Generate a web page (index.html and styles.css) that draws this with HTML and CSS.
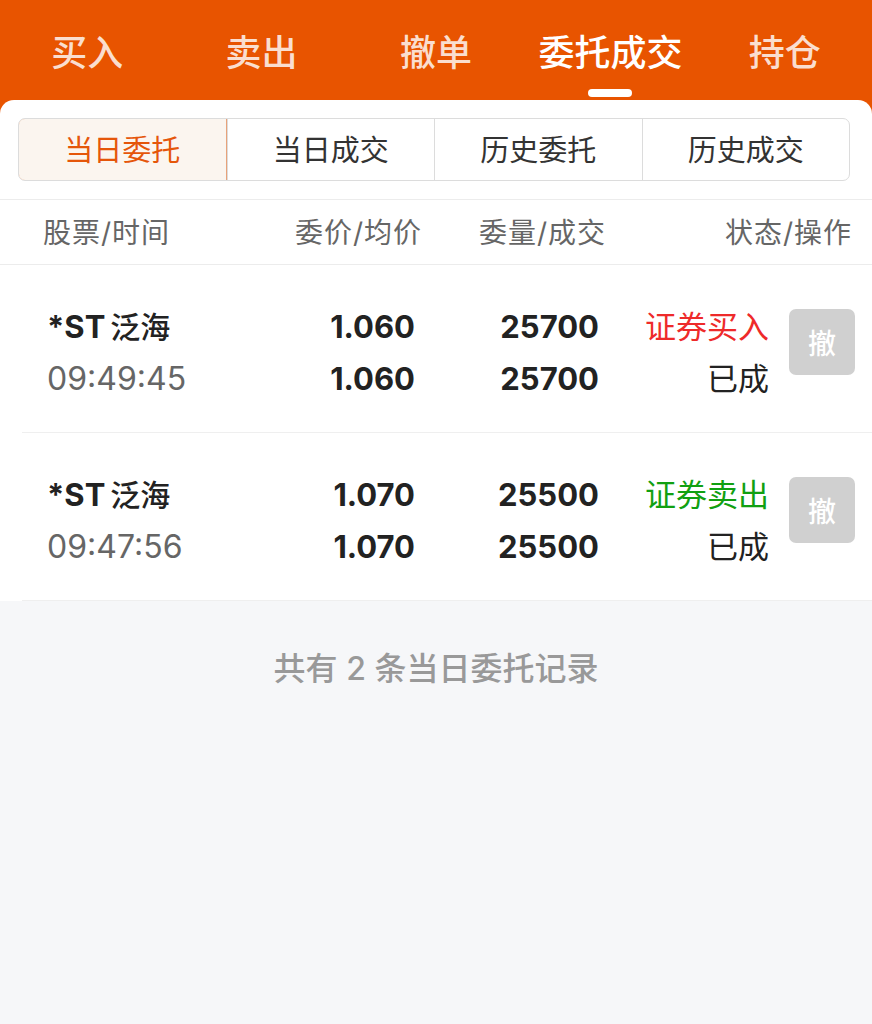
FILE: index.html
```html
<!DOCTYPE html>
<html lang="zh-CN">
<head>
    <meta charset="UTF-8">
    <meta name="viewport" content="width=device-width, initial-scale=1.0">
    <title>委托成交</title>
    <link rel="stylesheet" href="styles.css">
</head>
<body>

<div class="topbar">
    <div class="nav-item">买入</div>
    <div class="nav-item">卖出</div>
    <div class="nav-item">撤单</div>
    <div class="nav-item active">委托成交</div>
    <div class="nav-item">持仓</div>
</div>

<div class="sheet">
<div class="panel">
    <div class="segment">
        <div class="seg-item active">当日委托</div>
        <div class="seg-item">当日成交</div>
        <div class="seg-item">历史委托</div>
        <div class="seg-item">历史成交</div>
    </div>

    <div class="list-head">
        <div>股票/时间</div>
        <div class="right">委价/均价</div>
        <div class="right">委量/成交</div>
        <div class="right">状态/操作</div>
    </div>

    <div class="order">
        <div class="cell">
            <div class="line strong">*ST<span class="cn">泛海</span></div>
            <div class="line time">09:49:45</div>
        </div>
        <div class="cell right">
            <div class="line strong">1.060</div>
            <div class="line strong">1.060</div>
        </div>
        <div class="cell right">
            <div class="line strong">25700</div>
            <div class="line strong">25700</div>
        </div>
        <div class="cell right">
            <div class="line status buy">证券买入</div>
            <div class="line status">已成</div>
        </div>
        <div class="op"><button class="cancel">撤</button></div>
    </div>

    <div class="order">
        <div class="cell">
            <div class="line strong">*ST<span class="cn">泛海</span></div>
            <div class="line time">09:47:56</div>
        </div>
        <div class="cell right">
            <div class="line strong">1.070</div>
            <div class="line strong">1.070</div>
        </div>
        <div class="cell right">
            <div class="line strong">25500</div>
            <div class="line strong">25500</div>
        </div>
        <div class="cell right">
            <div class="line status sell">证券卖出</div>
            <div class="line status">已成</div>
        </div>
        <div class="op"><button class="cancel">撤</button></div>
    </div>
</div>
</div>

<div class="summary">共有 2 条当日委托记录</div>

</body>
</html>
```

FILE: styles.css
```css
body {
    margin: 0;
    font-family: "Inter", "Noto Sans CJK SC", sans-serif;
    background-color: #f6f7f9;
    color: #222;
    min-height: 1024px;
}
.topbar {
    display: flex;
    height: 100px;
    box-sizing: border-box;
    padding-top: 6px;
    background-color: #e85400;
}
.nav-item {
    flex: 1;
    text-align: center;
    line-height: 94px;
    font-size: 36px;
    font-weight: 500;
    color: rgba(255,255,255,0.82);
    position: relative;
}
.nav-item.active {
    color: #fff;
}
.nav-item.active::after {
    content: "";
    position: absolute;
    left: 50%;
    bottom: 3px;
    width: 44px;
    height: 8px;
    margin-left: -22px;
    border-radius: 4px;
    background-color: #fff;
}
.sheet {
    background-color: #e85400;
}
.panel {
    background-color: #fff;
    border-radius: 14px 14px 0 0;
    padding-top: 18px;
}
.segment {
    display: flex;
    margin: 0 22px 0 18px;
    height: 63px;
    box-sizing: border-box;
    border: 1px solid #dcdcdc;
    border-radius: 7px;
    overflow: hidden;
}
.seg-item {
    flex: 1;
    text-align: center;
    line-height: 63px;
    font-size: 29px;
    color: #333;
    border-left: 1px solid #dcdcdc;
}
.seg-item:first-child {
    border-left: none;
}
.seg-item.active {
    color: #e5560a;
    background-color: #fbf5ef;
    border: 1px solid #e8a27a;
    border-radius: 7px 0 0 7px;
    margin: -1px 0 -1px -1px;
}
.list-head {
    display: grid;
    grid-template-columns: 1fr 171px 184px 246px;
    padding: 0 21px 0 43px;
    margin-top: 18px;
    height: 66px;
    box-sizing: border-box;
    border-top: 1px solid #ececec;
    border-bottom: 1px solid #ececec;
    line-height: 66px;
    font-size: 28px;
    letter-spacing: 1px;
    color: #666;
}
.right {
    text-align: right;
}
.list-head .right {
    margin-right: -1px;
}
.order {
    display: grid;
    grid-template-columns: 1fr 155px 184px 170px 86px;
    padding: 36px 17px 27px 25px;
    margin-left: 22px;
    border-bottom: 1px solid #efefef;
}
.line {
    height: 52px;
    line-height: 52px;
    font-size: 31px;
    white-space: nowrap;
}
.strong {
    font-weight: bold;
    color: #222;
}
.cn {
    margin-left: 5px;
    font-weight: 500;
    font-size: 30px;
}
.time {
    color: #666;
    font-size: 32px;
}
.status {
    color: #222;
    font-size: 31px;
}
.status.buy {
    color: #ee2a2a;
}
.status.sell {
    color: #11a011;
}
.op {
    display: flex;
    justify-content: flex-end;
    align-items: flex-start;
}
.cancel {
    width: 66px;
    height: 66px;
    margin-top: 8px;
    border: none;
    border-radius: 7px;
    background-color: #d0d0d0;
    color: #fff;
    font-family: "Noto Sans CJK SC", sans-serif;
    font-size: 28px;
    font-weight: 500;
    padding: 0;
}
.summary {
    text-align: center;
    padding-top: 48px;
    line-height: 40px;
    font-size: 32px;
    font-weight: 500;
    color: #999;
}
```
